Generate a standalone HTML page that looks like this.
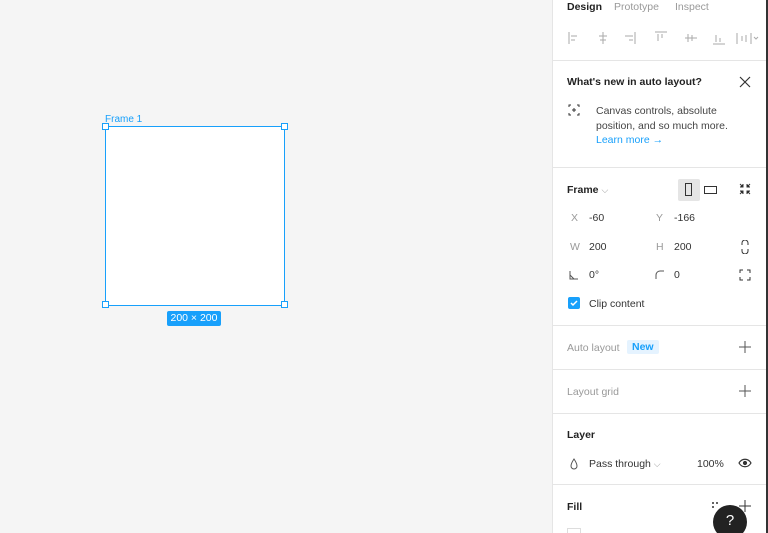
<!DOCTYPE html>
<html><head><meta charset="utf-8"><style>
*{margin:0;padding:0;box-sizing:border-box}
html,body{width:768px;height:533px;overflow:hidden}
body{background:#f5f5f5;font-family:"Liberation Sans",sans-serif;font-size:10.5px;color:#333;position:relative}
.a{position:absolute;white-space:nowrap}
#panel{position:absolute;left:552px;top:0;width:216px;height:533px;background:#fff;border-left:1px solid #e5e5e5;border-right:2px solid #333;overflow:hidden}
.hr{position:absolute;left:0;width:214px;height:1px;background:#e5e5e5}
.g{color:#999}
.b{font-weight:bold;color:#222}
.h{position:absolute;width:7px;height:7px;background:#fff;border:1px solid #18a0fb}
</style></head><body>
<div class="a" style="left:105px;top:114px;color:#18a0fb;font-size:10px">Frame 1</div>
<div class="a" style="left:105px;top:126px;width:180px;height:180px;background:#fff;border:1px solid #18a0fb"></div>
<div class="h" style="left:102px;top:123px"></div><div class="h" style="left:281px;top:123px"></div>
<div class="h" style="left:102px;top:301px"></div><div class="h" style="left:281px;top:301px"></div>
<div class="a" style="left:167px;top:311px;width:54px;height:15px;background:#18a0fb;color:#fff;border-radius:2px;font-size:10.5px;text-align:center;line-height:15px">200 × 200</div>

<div id="panel">
<div class="a b" style="left:14px;top:1px">Design</div>
<div class="a g" style="left:61px;top:1px">Prototype</div>
<div class="a g" style="left:122px;top:1px">Inspect</div>
<svg class="a" style="left:14px;top:30px" width="200" height="16" stroke="#aaa" fill="none" stroke-width="1">
<path d="M2 2v12M4 6h6M4 10h4"/><path d="M36 2v12M32 6h8M33 10h6"/><path d="M68 2v12M58 6h8M62 10h4"/>
<path d="M88 2h12M91 4v7M95 4v4"/><path d="M118 8h12M121 4v8M125 5v6"/><path d="M146 14h12M149 5v7M153 8v4"/>
<path d="M170 3v11M184 3v11M175 6v5M179 5v7M187 7l2 2 2-2"/></svg>
<div class="hr" style="top:60px"></div>
<div class="a b" style="left:14px;top:76px">What's new in auto layout?</div>
<svg class="a" style="left:186px;top:76px" width="12" height="12" stroke="#333" stroke-width="1.2"><path d="M1 1l10 10M11 1L1 11"/></svg>
<svg class="a" style="left:15px;top:104px" width="12" height="12" stroke="#333" fill="none"><path d="M1 3V1h2M9 1h2v2M11 9v2H9M3 11H1V9M6 4v4M4 6h4"/></svg>
<div class="a" style="left:43px;top:104px;line-height:14.5px;color:#444">Canvas controls, absolute<br>position, and so much more.<br><span style="color:#18a0fb">Learn more →</span></div>
<div class="hr" style="top:167px"></div>
<div class="a b" style="left:14px;top:184px">Frame <span class="g" style="font-weight:normal;font-size:9px">⌵</span></div>
<div class="a" style="left:125px;top:179px;width:22px;height:22px;background:#e5e5e5;border-radius:2px"></div>
<svg class="a" style="left:130px;top:182px" width="40" height="16" stroke="#333" fill="none"><rect x="2.5" y="1.5" width="6" height="12"/><rect x="21.5" y="4.5" width="12" height="7"/></svg>
<svg class="a" style="left:186px;top:183px" width="12" height="12" stroke="#333"><path d="M1 1l3 3M4 1v3H1M11 1L8 4M8 1v3h3M1 11l3-3M1 8h3v3M11 11L8 8M8 11V8h3"/></svg>
<div class="a g" style="left:18px;top:212px">X</div><div class="a" style="left:36px;top:212px">-60</div>
<div class="a g" style="left:103px;top:212px">Y</div><div class="a" style="left:121px;top:212px">-166</div>
<div class="a g" style="left:17px;top:241px">W</div><div class="a" style="left:36px;top:241px">200</div>
<div class="a g" style="left:103px;top:241px">H</div><div class="a" style="left:121px;top:241px">200</div>
<svg class="a" style="left:187px;top:240px" width="10" height="14" stroke="#333" fill="none"><path d="M2 5V3a3 3 0 016 0v2M2 9v2a3 3 0 006 0V9"/></svg>
<svg class="a" style="left:16px;top:270px" width="10" height="10" stroke="#555" fill="none"><path d="M1 1v8h8M1 5l4 4"/></svg>
<div class="a" style="left:36px;top:269px">0°</div>
<svg class="a" style="left:102px;top:270px" width="10" height="10" stroke="#555" fill="none"><path d="M1 9V5a4 4 0 014-4h4"/></svg>
<div class="a" style="left:121px;top:269px">0</div>
<svg class="a" style="left:186px;top:269px" width="12" height="12" stroke="#333" fill="none"><path d="M1 4V1h3M8 1h3v3M11 8v3H8M4 11H1V8"/></svg>
<div class="a" style="left:15px;top:297px;width:12px;height:12px;background:#18a0fb;border-radius:2px"></div>
<svg class="a" style="left:16px;top:298px" width="10" height="10" stroke="#fff" stroke-width="1.5" fill="none"><path d="M2 5l2 2 4-4"/></svg>
<div class="a" style="left:36px;top:298px">Clip content</div>
<div class="hr" style="top:325px"></div>
<div class="a g" style="left:14px;top:342px">Auto layout</div>
<div class="a" style="left:74px;top:340px;background:#e5f3ff;color:#18a0fb;font-weight:bold;padding:1px 5px;border-radius:2px;font-size:10.5px">New</div>
<svg class="a" style="left:186px;top:341px" width="12" height="12" stroke="#555"><path d="M6 0v12M0 6h12"/></svg>
<div class="hr" style="top:369px"></div>
<div class="a g" style="left:14px;top:386px">Layout grid</div>
<svg class="a" style="left:186px;top:385px" width="12" height="12" stroke="#555"><path d="M6 0v12M0 6h12"/></svg>
<div class="hr" style="top:413px"></div>
<div class="a b" style="left:14px;top:429px">Layer</div>
<svg class="a" style="left:16px;top:458px" width="10" height="12" stroke="#555" fill="none"><path d="M5 1C3 4 2 6 2 8a3 3 0 006 0c0-2-1-4-3-7z"/></svg>
<div class="a" style="left:36px;top:458px">Pass through <span class="g" style="font-size:9px">⌵</span></div>
<div class="a" style="left:144px;top:458px">100%</div>
<svg class="a" style="left:185px;top:458px" width="14" height="10" stroke="#333" fill="none" stroke-width="1.2"><path d="M1 5c3-5 9-5 12 0-3 5-9 5-12 0z"/><circle cx="7" cy="5" r="1.5" fill="#333"/></svg>
<div class="hr" style="top:484px"></div>
<div class="a b" style="left:14px;top:501px">Fill</div>
<svg class="a" style="left:158px;top:501px" width="12" height="10" fill="#333"><circle cx="2" cy="2" r="1"/><circle cx="6" cy="2" r="1"/><circle cx="2" cy="6" r="1"/></svg>
<svg class="a" style="left:186px;top:500px" width="12" height="12" stroke="#333"><path d="M6 0v12M0 6h12"/></svg>
<div class="a" style="left:14px;top:528px;width:14px;height:10px;border:1px solid #ddd"></div>
<div class="a" style="left:160px;top:505px;width:34px;height:34px;border-radius:50%;background:#222;color:#fff;font-size:15px;text-align:center;line-height:32px">?</div>
</div>
</body></html>
